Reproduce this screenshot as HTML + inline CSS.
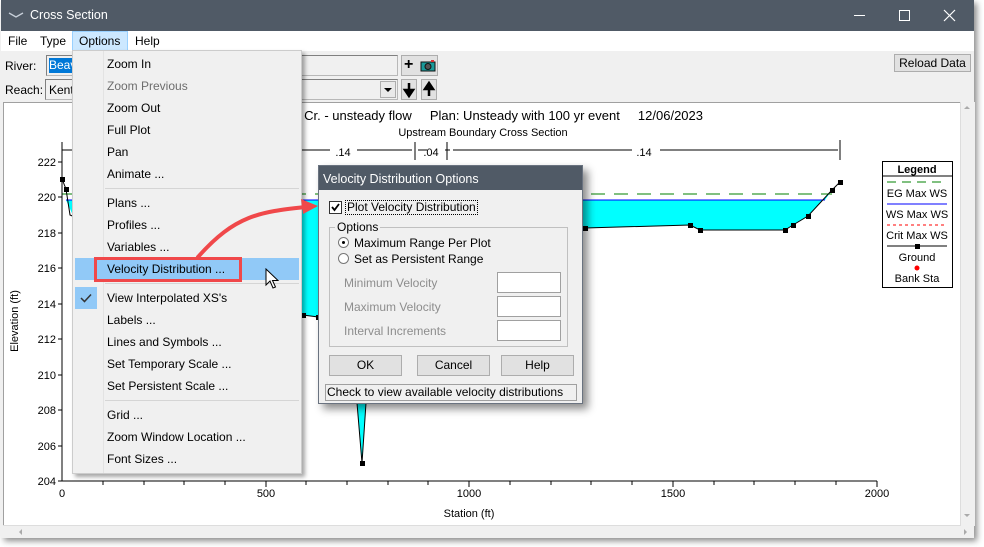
<!DOCTYPE html>
<html><head><meta charset="utf-8"><style>
*{margin:0;padding:0;box-sizing:border-box}
body{width:984px;height:547px;background:#fff;position:relative;overflow:hidden;font-family:"Liberation Sans",Arial,sans-serif;font-size:12px;color:#000}
.abs{position:absolute}
.win{left:1px;top:0;width:973px;height:538px;background:#f0f0f0;box-shadow:3px 3px 6px rgba(0,0,0,.45)}
.tb{left:0;top:0;width:973px;height:31px;background:#505a66;color:#fff}
.menu{left:0;top:31px;width:973px;height:20px;background:#fff}
.btn{background:#e1e1e1;border:1px solid #adadad}
.dd{left:72px;top:50px;width:230px;height:424px;background:#f0f0f0;border:1px solid #ccc;box-shadow:3px 3px 4px rgba(0,0,0,.35)}
.it{position:absolute;left:34px;font-size:12px}
.sep{position:absolute;left:32px;width:194px;height:1px;background:#d5d5d5}
.dlg{left:318px;top:165px;width:265px;height:239px;background:#f0f0f0;border:1px solid #6a7380;box-shadow:5px 5px 8px rgba(0,0,0,.45)}
.gray{color:#8d8d8d}
.tbox{position:absolute;left:178px;width:64px;height:21px;background:#fff;border:1px solid #a0a0a0}
.db{position:absolute;top:189px;width:73px;height:21px;background:#e1e1e1;border:1px solid #adadad;text-align:center;line-height:19px}
</style></head><body>
<div class="abs win">
 <div class="abs tb">
  <svg class="abs" style="left:7px;top:11px" width="16" height="8"><path d="M1 2 L8 6 L15 2" stroke="#c8d0da" fill="none" stroke-width="1.3"/></svg>
  <div class="abs" style="left:29px;top:8px;font-size:12.5px">Cross Section</div>
  <div class="abs" style="left:853px;top:15px;width:11px;height:1px;background:#fff"></div>
  <div class="abs" style="left:898px;top:10px;width:11px;height:11px;border:1px solid #fff"></div>
  <svg class="abs" style="left:942px;top:9px" width="13" height="13"><path d="M1 1L12 12M12 1L1 12" stroke="#fff" stroke-width="1.2"/></svg>
 </div>
 <div class="abs menu">
  <span class="abs" style="left:7px;top:3px">File</span>
  <span class="abs" style="left:39px;top:3px">Type</span>
  <div class="abs" style="left:71px;top:0;width:56px;height:20px;background:#cce8ff;border:1px solid #99d1ff"></div>
  <span class="abs" style="left:78px;top:3px">Options</span>
  <span class="abs" style="left:134px;top:3px">Help</span>
 </div>
 <span class="abs" style="left:4px;top:59px">River:</span>
 <span class="abs" style="left:4px;top:83px">Reach:</span>
 <div class="abs" style="left:45px;top:55px;width:352px;height:21px;background:#f0f0f0;border:1px solid #b8b8b8;border-top-color:#808080;border-left-color:#808080"></div>
 <div class="abs" style="left:48px;top:58px;width:24px;height:15px;background:#0078d7;color:#fff;line-height:15px">Beav</div>
 <div class="abs" style="left:44px;top:79px;width:353px;height:21px;background:#f0f0f0;border:1px solid #b8b8b8;border-top-color:#808080;border-left-color:#808080"><span style="position:absolute;left:3px;top:3px">Kent</span>
  <div style="position:absolute;right:1px;top:1px;width:16px;height:17px;background:#e9e9e9;border:1px solid #adadad"><div style="margin:6px 3px;border-left:4px solid transparent;border-right:4px solid transparent;border-top:4px solid #000;width:0"></div></div></div>
 <div class="abs btn" style="left:400px;top:55px;width:37px;height:21px;font-weight:bold;font-size:16px;line-height:18px;padding-left:2px">+<svg style="position:absolute;left:18px;top:4px" width="16" height="12"><rect x="1" y="2" width="14" height="9" fill="#1a9a9a" stroke="#111"/><circle cx="8" cy="6.5" r="3" fill="#555" stroke="#111"/><rect x="11" y="0" width="3" height="2" fill="#d33"/></svg></div>
 <div class="abs btn" style="left:400px;top:79px;width:16px;height:21px"><svg width="14" height="19"><path d="M7 3V14M3 10L7 16L11 10Z" stroke="#000" stroke-width="2.5" fill="#000"/></svg></div>
 <div class="abs btn" style="left:420px;top:79px;width:16px;height:21px"><svg width="14" height="19"><path d="M7 16V5M3 9L7 3L11 9Z" stroke="#000" stroke-width="2.5" fill="#000"/></svg></div>
 <div class="abs btn" style="left:893px;top:54px;width:77px;height:18px;text-align:center;line-height:16px">Reload Data</div>

 <div class="abs" style="left:2px;top:102px;width:958px;height:424px;background:#fff;border:1px solid #a0a0a0"></div>
 <div class="abs" style="left:959px;top:102px;width:15px;height:424px;background:#f0f0f0;border-left:1px solid #ddd"></div>
 <div class="abs" style="left:2px;top:525px;width:958px;height:13px;background:#f0f0f0;border-top:1px solid #ddd"></div>

 <svg class="abs" style="left:-1px;top:0" width="975" height="538" font-family="Liberation Sans,Arial,sans-serif">
  <text x="703" y="120" font-size="13" text-anchor="end" xml:space="preserve">Beaver Cr. - unsteady flow     Plan: Unsteady with 100 yr event     12/06/2023</text>
  <text x="483" y="136" font-size="11" text-anchor="middle">Upstream Boundary Cross Section</text>
  <path d="M62 150H330M357 150H412M418 150H427M445 150H450M453 150H632M660 150H838" stroke="#000"/>
  <path d="M415 142V160M447 142V160M840 140V160M62 142V158" stroke="#000"/>
  <text x="343" y="156" font-size="11" text-anchor="middle">.14</text>
  <text x="431" y="156" font-size="11" text-anchor="middle">.04</text>
  <text x="644" y="156" font-size="11" text-anchor="middle">.14</text>
  <path d="M66 200H825L832 190L840 182L808 216L793 225L785 230L700 230L690 225L585 228L366 403L362 463L357 403L318 317L303 315L75 220Z" fill="#00ffff"/>
  <path d="M62 194H832" stroke="#008000" stroke-dasharray="14 9"/>
  <path d="M66 200H825" stroke="#0000ff"/>
  <path d="M62 179L66 189L70 215L303 315L318 317L357 403L362 463L366 403L585 228L690 225L700 230L785 230L793 225L808 216L832 190L840 182" stroke="#000" fill="none"/>
  <g fill="#000"><rect x="60" y="177" width="5" height="5"/><rect x="64" y="187" width="5" height="5"/><rect x="301" y="313" width="5" height="5"/><rect x="316" y="315" width="5" height="5"/><rect x="360" y="461" width="5" height="5"/><rect x="583" y="226" width="5" height="5"/><rect x="688" y="223" width="5" height="5"/><rect x="698" y="228" width="5" height="5"/><rect x="783" y="228" width="5" height="5"/><rect x="791" y="223" width="5" height="5"/><rect x="806" y="214" width="5" height="5"/><rect x="830" y="188" width="5" height="5"/><rect x="838" y="180" width="5" height="5"/></g>
  <path d="M62 150V481H877" stroke="#000" fill="none"/>
  <g stroke="#000"><path d="M58 162H62M58 197H62M58 233H62M58 268H62M58 304H62M58 339H62M58 375H62M58 410H62M58 446H62M58 481H62"/>
  <path d="M103 481V485M144 481V485M184 481V485M225 481V485M266 481V487M306 481V485M347 481V485M388 481V485M428 481V485M469 481V487M510 481V485M551 481V485M591 481V485M632 481V485M673 481V487M714 481V485M754 481V485M795 481V485M836 481V485M877 481V487"/></g>
  <g font-size="11" text-anchor="end"><text x="56" y="166">222</text><text x="56" y="201">220</text><text x="56" y="237">218</text><text x="56" y="272">216</text><text x="56" y="308">214</text><text x="56" y="343">212</text><text x="56" y="379">210</text><text x="56" y="414">208</text><text x="56" y="450">206</text><text x="56" y="485">204</text></g>
  <g font-size="11" text-anchor="middle"><text x="62" y="497">0</text><text x="266" y="497">500</text><text x="469" y="497">1000</text><text x="673" y="497">1500</text><text x="877" y="497">2000</text><text x="469" y="517">Station (ft)</text></g>
  <text transform="translate(18,321) rotate(-90)" font-size="11" text-anchor="middle">Elevation (ft)</text>
  <rect x="882.5" y="161.5" width="70" height="126" fill="#fff" stroke="#000"/>
  <path d="M882 176H952" stroke="#000"/>
  <text x="917" y="173" font-size="11" font-weight="bold" text-anchor="middle">Legend</text>
  <path d="M887 182H947" stroke="#008000" stroke-dasharray="9 6"/>
  <text x="917" y="197" font-size="11" text-anchor="middle">EG Max WS</text>
  <path d="M887 204H947" stroke="#0000ff"/>
  <text x="917" y="218" font-size="11" text-anchor="middle">WS Max WS</text>
  <path d="M887 225H947" stroke="#f00" stroke-dasharray="3 3"/>
  <text x="917" y="239" font-size="11" text-anchor="middle">Crit Max WS</text>
  <path d="M887 246H947" stroke="#000"/><rect x="915" y="244" width="5" height="5"/>
  <text x="917" y="261" font-size="11" text-anchor="middle">Ground</text>
  <circle cx="917" cy="268" r="2.5" fill="#f00"/>
  <text x="917" y="282" font-size="11" text-anchor="middle">Bank Sta</text>
  <path d="M964 109L967 106L970 109Z M964 514L967 517L970 514Z M964 529L967 532L964 535Z M22 529L19 532L22 535Z" fill="#aaa"/>
 </svg>
</div>

<div class="abs dd">
 <div class="abs" style="left:30px;top:0;width:1px;height:422px;background:#e3e3e3"></div>
 <div class="it" style="top:6px">Zoom In</div>
 <div class="it gray" style="top:28px;color:#6d6d6d">Zoom Previous</div>
 <div class="it" style="top:50px">Zoom Out</div>
 <div class="it" style="top:72px">Full Plot</div>
 <div class="it" style="top:94px">Pan</div>
 <div class="it" style="top:116px">Animate ...</div>
 <div class="sep" style="top:137px"></div>
 <div class="it" style="top:145px">Plans ...</div>
 <div class="it" style="top:167px">Profiles ...</div>
 <div class="it" style="top:189px">Variables ...</div>
 <div class="abs" style="left:2px;top:207px;width:224px;height:22px;background:#91c9f7"></div>
 <div class="abs" style="left:21px;top:206px;width:148px;height:25px;border:3px solid #f0484a"></div>
 <div class="it" style="top:211px">Velocity Distribution ...</div>
 <div class="sep" style="top:232px"></div>
 <div class="abs" style="left:2px;top:236px;width:22px;height:22px;background:#91c9f7"></div>
 <svg class="abs" style="left:7px;top:242px" width="12" height="10"><path d="M1 5L4.5 8.5L11 1.5" stroke="#333" stroke-width="1.5" fill="none"/></svg>
 <div class="it" style="top:240px">View Interpolated XS's</div>
 <div class="it" style="top:262px">Labels ...</div>
 <div class="it" style="top:284px">Lines and Symbols ...</div>
 <div class="it" style="top:306px">Set Temporary Scale ...</div>
 <div class="it" style="top:328px">Set Persistent Scale ...</div>
 <div class="sep" style="top:349px"></div>
 <div class="it" style="top:357px">Grid ...</div>
 <div class="it" style="top:379px">Zoom Window Location ...</div>
 <div class="it" style="top:401px">Font Sizes ...</div>
</div>
<svg class="abs" style="left:265px;top:268px" width="16" height="22"><path d="M1 1V17L5 13L8 20L10.5 19L7.5 12.5H13Z" fill="#fff" stroke="#000"/></svg>
<svg class="abs" style="left:0;top:0" width="984" height="547"><path d="M198 257C235 215 260 212 305 207" stroke="#f0484a" stroke-width="4" fill="none" stroke-linecap="round"/><path d="M318 206L301 199L303 214Z" fill="#f0484a"/></svg>

<div class="abs dlg">
 <div class="abs" style="left:0;top:0;width:263px;height:24px;background:#505a66;color:#fff;font-size:12.5px;padding:6px 0 0 4px">Velocity Distribution Options</div>
 <div class="abs" style="left:10px;top:35px;width:13px;height:13px;background:#fff;border:1px solid #333"><svg width="11" height="11" style="position:absolute;left:0;top:0"><path d="M2 5L4.5 8L9 2" stroke="#000" stroke-width="1.8" fill="none"/></svg></div>
 <div class="abs" style="left:26px;top:34px;border:1px dotted #000;padding:0 1px;line-height:13px">Plot Velocity Distribution</div>
 <div class="abs" style="left:10px;top:61px;width:239px;height:120px;border:1px solid #c0c0c0"></div>
 <div class="abs" style="left:16px;top:54px;background:#f0f0f0;padding:0 2px">Options</div>
 <div class="abs" style="left:19px;top:71px;width:11px;height:11px;border-radius:50%;background:#fff;border:1px solid #777"><div style="width:3px;height:3px;background:#000;border-radius:50%;margin:3px"></div></div>
 <div class="abs" style="left:35px;top:70px">Maximum Range Per Plot</div>
 <div class="abs" style="left:19px;top:87px;width:11px;height:11px;border-radius:50%;background:#fff;border:1px solid #777"></div>
 <div class="abs" style="left:35px;top:86px">Set as Persistent Range</div>
 <div class="abs gray" style="left:25px;top:110px">Minimum Velocity</div>
 <div class="abs gray" style="left:25px;top:134px">Maximum Velocity</div>
 <div class="abs gray" style="left:25px;top:158px">Interval Increments</div>
 <div class="tbox" style="top:106px"></div>
 <div class="tbox" style="top:130px"></div>
 <div class="tbox" style="top:154px"></div>
 <div class="db" style="left:10px">OK</div>
 <div class="db" style="left:98px">Cancel</div>
 <div class="db" style="left:182px">Help</div>
 <div class="abs" style="left:6px;top:218px;width:252px;height:17px;border:1px solid #a0a0a0;line-height:14px;padding-left:1px">Check to view available velocity distributions</div>
</div>
</body></html>
